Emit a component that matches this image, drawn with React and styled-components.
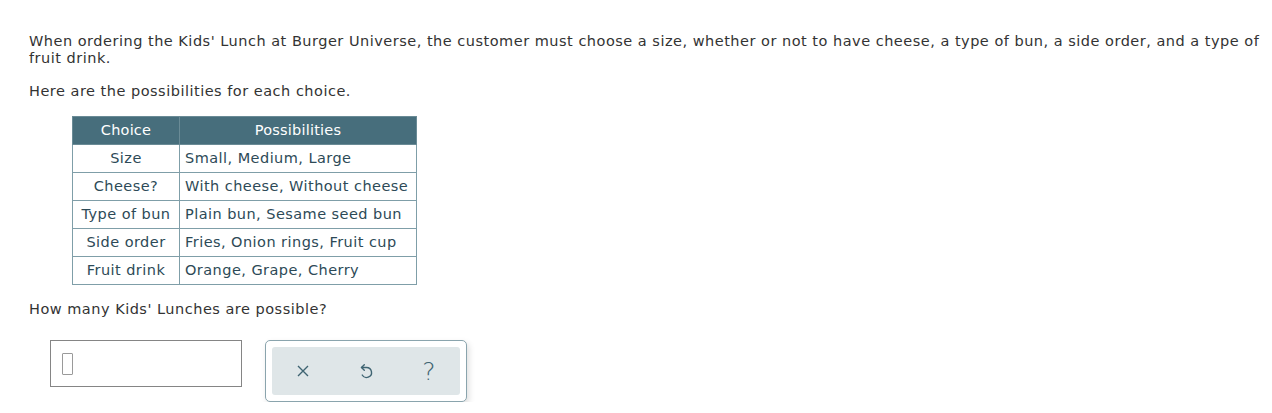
import React from "react";
import styled, { createGlobalStyle } from "styled-components";

const Global = createGlobalStyle`
  html, body { margin: 0; padding: 0; background: #fff; }
  body { font-family: Verdana, "DejaVu Sans", sans-serif; color: #333; }
`;

const Page = styled.div`
  padding: 33px 0 0 29px;
  width: 1242px;
  font-size: 14.5px;
  letter-spacing: 0.5px;
  line-height: 17px;
`;

const Para = styled.p`
  margin: 0 0 ${(p) => p.$mb || 0}px 0;
`;

const Table = styled.table`
  border-collapse: collapse;
  margin: 16px 0 0 43px;
  width: 345px;
  color: #2d4a57;
  font-size: 14.5px;
  letter-spacing: 0.45px;
`;

const Th = styled.th`
  background: #476e7c;
  color: #fff;
  font-family: Tahoma, "DejaVu Sans", sans-serif;
  font-weight: normal;
  letter-spacing: 0.2px;
  height: 27px;
  padding: 0;
  border: 1px solid #6a8b96;
  text-align: center;
  width: ${(p) => (p.$w ? `${p.$w}px` : "auto")};
`;

const Td = styled.td`
  height: 27px;
  padding: 0 ${(p) => (p.$left ? "4px 0 5px" : "4px")};
  border: 1px solid #7f9ea8;
  text-align: ${(p) => (p.$left ? "left" : "center")};
  white-space: nowrap;
`;

const Question = styled.p`
  margin: 16px 0 0 0;
`;

const AnswerRow = styled.div`
  display: flex;
  align-items: flex-start;
  gap: 23px;
  margin: 22px 0 0 21px;
`;

const InputBox = styled.div`
  width: 179px;
  height: 45px;
  border: 1px solid #858585;
  display: flex;
  align-items: center;
  padding-left: 11px;
`;

const Caret = styled.div`
  width: 9px;
  height: 20px;
  border: 1px solid #9a9a9a;
  border-radius: 1px;
`;

const Panel = styled.div`
  width: 188px;
  height: 48px;
  padding: 6px;
  border: 1px solid #8aa4ad;
  border-radius: 5px;
  background: #fff;
  box-shadow: 2px 3px 6px rgba(0, 0, 0, 0.13);
`;

const PanelInner = styled.div`
  height: 100%;
  background: #dfe6e8;
  border-radius: 3px;
  display: flex;
  align-items: center;
  justify-content: center;
  gap: 39px;
`;

const IconBtn = styled.div`
  width: 24px;
  height: 24px;
  display: flex;
  align-items: center;
  justify-content: center;
  color: #3f6472;
`;

const QMark = styled.span`
  font-family: "DejaVu Sans", sans-serif;
  font-size: 25px;
  font-weight: 200;
  letter-spacing: 0;
  color: #3f6472;
  line-height: 1;
`;

const rows = [
  ["Size", "Small, Medium, Large"],
  ["Cheese?", "With cheese, Without cheese"],
  ["Type of bun", "Plain bun, Sesame seed bun"],
  ["Side order", "Fries, Onion rings, Fruit cup"],
  ["Fruit drink", "Orange, Grape, Cherry"],
];

export default function App() {
  return (
    <>
      <Global />
      <Page>
        <Para $mb={16}>
          When ordering the Kids' Lunch at Burger Universe, the customer must
          choose a size, whether or not to have cheese, a type of bun, a side
          order, and a type of fruit drink.
        </Para>
        <Para>Here are the possibilities for each choice.</Para>
        <Table>
          <thead>
            <tr>
              <Th $w={106}>Choice</Th>
              <Th>Possibilities</Th>
            </tr>
          </thead>
          <tbody>
            {rows.map(([a, b]) => (
              <tr key={a}>
                <Td>{a}</Td>
                <Td $left>{b}</Td>
              </tr>
            ))}
          </tbody>
        </Table>
        <Question>How many Kids' Lunches are possible?</Question>
        <AnswerRow>
          <InputBox>
            <Caret />
          </InputBox>
          <Panel>
            <PanelInner>
              <IconBtn>
                <svg width="14" height="14" viewBox="0 0 14 14">
                  <path d="M2 2 L12 12 M12 2 L2 12" stroke="currentColor" strokeWidth="1.4" fill="none" />
                </svg>
              </IconBtn>
              <IconBtn>
                <svg width="14" height="17" viewBox="0 0 14 17">
                  <path
                    d="M2.5 4.5 H7.5 A5 5 0 1 1 3.2 12"
                    stroke="currentColor"
                    strokeWidth="1.4"
                    fill="none"
                    strokeLinecap="round"
                  />
                  <path
                    d="M5.3 1.7 L2.5 4.5 L5.3 7.3"
                    stroke="currentColor"
                    strokeWidth="1.4"
                    fill="none"
                    strokeLinecap="round"
                    strokeLinejoin="round"
                  />
                </svg>
              </IconBtn>
              <IconBtn>
                <QMark>?</QMark>
              </IconBtn>
            </PanelInner>
          </Panel>
        </AnswerRow>
      </Page>
    </>
  );
}
